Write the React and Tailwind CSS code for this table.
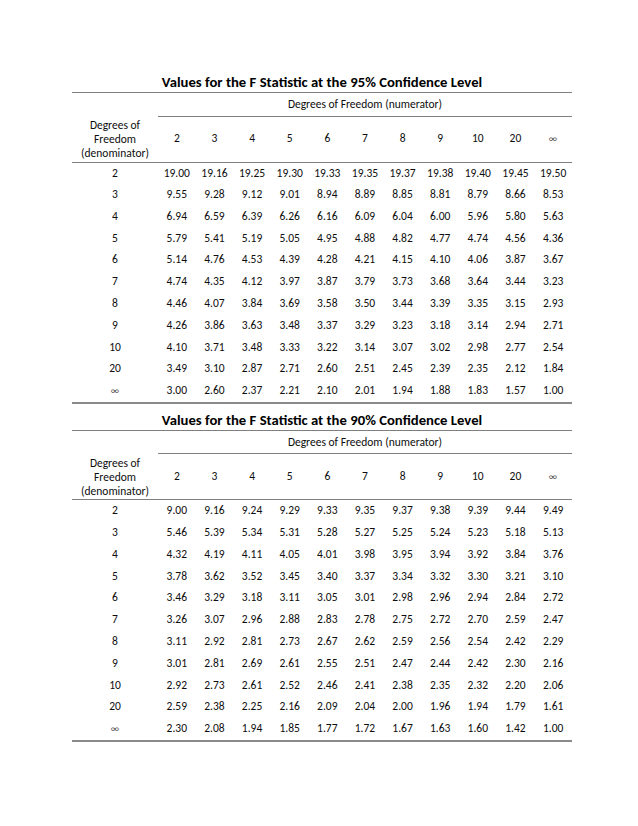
import React from "react";

const headers = ["2", "3", "4", "5", "6", "7", "8", "9", "10", "20", "∞"];

const table95 = [
  ["2", "19.00", "19.16", "19.25", "19.30", "19.33", "19.35", "19.37", "19.38", "19.40", "19.45", "19.50"],
  ["3", "9.55", "9.28", "9.12", "9.01", "8.94", "8.89", "8.85", "8.81", "8.79", "8.66", "8.53"],
  ["4", "6.94", "6.59", "6.39", "6.26", "6.16", "6.09", "6.04", "6.00", "5.96", "5.80", "5.63"],
  ["5", "5.79", "5.41", "5.19", "5.05", "4.95", "4.88", "4.82", "4.77", "4.74", "4.56", "4.36"],
  ["6", "5.14", "4.76", "4.53", "4.39", "4.28", "4.21", "4.15", "4.10", "4.06", "3.87", "3.67"],
  ["7", "4.74", "4.35", "4.12", "3.97", "3.87", "3.79", "3.73", "3.68", "3.64", "3.44", "3.23"],
  ["8", "4.46", "4.07", "3.84", "3.69", "3.58", "3.50", "3.44", "3.39", "3.35", "3.15", "2.93"],
  ["9", "4.26", "3.86", "3.63", "3.48", "3.37", "3.29", "3.23", "3.18", "3.14", "2.94", "2.71"],
  ["10", "4.10", "3.71", "3.48", "3.33", "3.22", "3.14", "3.07", "3.02", "2.98", "2.77", "2.54"],
  ["20", "3.49", "3.10", "2.87", "2.71", "2.60", "2.51", "2.45", "2.39", "2.35", "2.12", "1.84"],
  ["∞", "3.00", "2.60", "2.37", "2.21", "2.10", "2.01", "1.94", "1.88", "1.83", "1.57", "1.00"],
];

const table90 = [
  ["2", "9.00", "9.16", "9.24", "9.29", "9.33", "9.35", "9.37", "9.38", "9.39", "9.44", "9.49"],
  ["3", "5.46", "5.39", "5.34", "5.31", "5.28", "5.27", "5.25", "5.24", "5.23", "5.18", "5.13"],
  ["4", "4.32", "4.19", "4.11", "4.05", "4.01", "3.98", "3.95", "3.94", "3.92", "3.84", "3.76"],
  ["5", "3.78", "3.62", "3.52", "3.45", "3.40", "3.37", "3.34", "3.32", "3.30", "3.21", "3.10"],
  ["6", "3.46", "3.29", "3.18", "3.11", "3.05", "3.01", "2.98", "2.96", "2.94", "2.84", "2.72"],
  ["7", "3.26", "3.07", "2.96", "2.88", "2.83", "2.78", "2.75", "2.72", "2.70", "2.59", "2.47"],
  ["8", "3.11", "2.92", "2.81", "2.73", "2.67", "2.62", "2.59", "2.56", "2.54", "2.42", "2.29"],
  ["9", "3.01", "2.81", "2.69", "2.61", "2.55", "2.51", "2.47", "2.44", "2.42", "2.30", "2.16"],
  ["10", "2.92", "2.73", "2.61", "2.52", "2.46", "2.41", "2.38", "2.35", "2.32", "2.20", "2.06"],
  ["20", "2.59", "2.38", "2.25", "2.16", "2.09", "2.04", "2.00", "1.96", "1.94", "1.79", "1.61"],
  ["∞", "2.30", "2.08", "1.94", "1.85", "1.77", "1.72", "1.67", "1.63", "1.60", "1.42", "1.00"],
];

// the infinity sign is drawn smaller and lighter in the original
const Cell = ({ value }) =>
  value === "∞" ? <span className="text-[10px] text-[#555]">∞</span> : value;

const FTable = ({ level, rows }) => {
  return (
    <div className="w-[500px]">
      <div className="h-[22px] flex items-end justify-center pb-[2px] border-b border-[#7f7f7f]">
        <h2 className="font-bold text-[14.7px] leading-none text-black">
          Values for the F Statistic at the {level}% Confidence Level
        </h2>
      </div>
      <table className="w-full table-fixed border-collapse text-[11.5px] text-[#0d0d0d]">
        <colgroup>
          <col className="w-[86px]" />
          {headers.map((h) => (
            <col key={h} />
          ))}
        </colgroup>
        <tbody>
          <tr className="h-[23px]">
            <td />
            <td colSpan={11} className="text-center border-b border-[#7f7f7f] align-middle">
              Degrees of Freedom (numerator)
            </td>
          </tr>
          <tr className="h-[46px] border-b border-[#7f7f7f]">
            <td className="text-center leading-[14px]">
              Degrees of
              <br />
              Freedom
              <br />
              (denominator)
            </td>
            {headers.map((h) => (
              <td key={h} className="text-center">
                <Cell value={h} />
              </td>
            ))}
          </tr>
          {rows.map((row, i) => (
            <tr
              key={row[0]}
              className={i === rows.length - 1 ? "h-[23px] border-b-2 border-[#8a8a8a]" : "h-[21.8px]"}
            >
              {row.map((v, j) => (
                <td key={j} className="text-center p-0">
                  <Cell value={v} />
                </td>
              ))}
            </tr>
          ))}
        </tbody>
      </table>
    </div>
  );
};

export default function App() {
  return (
    <div className="w-[638px] h-[826px] bg-white pt-[71px] pl-[72px] font-['Carlito','Lato',sans-serif]">
      <FTable level="95" rows={table95} />
      <div className="mt-[5px]">
        <FTable level="90" rows={table90} />
      </div>
    </div>
  );
}
